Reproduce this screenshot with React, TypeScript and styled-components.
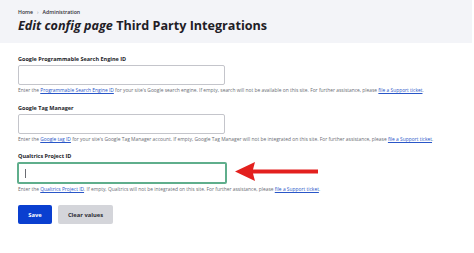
import React from "react";
import styled, { createGlobalStyle } from "styled-components";

const Global = createGlobalStyle`
  html, body { margin: 0; padding: 0; background: #ffffff; }
  body { font-family: "Open Sans", "Liberation Sans", sans-serif; color: #232429; }
  * { box-sizing: border-box; }
`;

const Page = styled.div`
  position: relative;
  width: 474px;
  height: 253px;
  overflow: hidden;
  background: #fff;
`;

const Header = styled.header`
  height: 43px;
  margin-right: 2px;
  background: #f3f4f8;
  padding: 9px 0 0 18px;
  display: flex;
  flex-direction: column;
`;

const Breadcrumb = styled.nav`
  display: flex;
  align-items: center;
  gap: 4px;
  font-size: 5.2px;
  font-weight: 600;
  line-height: 6px;
  color: #2f3036;
`;

const Sep = styled.span`
  color: #8e919a;
  font-weight: 400;
`;

const Title = styled.h1`
  margin: 2px 0 0;
  font-size: 12.6px;
  line-height: 17px;
  font-weight: 700;
  color: #1f2026;
  white-space: nowrap;
  em { font-style: italic; font-weight: 700; }
`;

const Form = styled.form`
  padding: 13px 0 0 18px;
  display: flex;
  flex-direction: column;
`;

const Field = styled.div`
  display: flex;
  flex-direction: column;
  margin-bottom: ${(p: { $mb: number }) => p.$mb}px;
`;

const Label = styled.label`
  font-size: 5.5px;
  font-weight: 700;
  line-height: 7px;
  color: #232429;
  margin-bottom: 2px;
`;

const Input = styled.div<{ $focus?: boolean }>`
  width: ${(p) => (p.$focus ? 210 : 207)}px;
  height: ${(p) => (p.$focus ? 22 : 20)}px;
  margin-left: ${(p) => (p.$focus ? -1 : 0)}px;
  border: ${(p) => (p.$focus ? "2px solid #5fae8c" : "1px solid #c4c5cb")};
  border-radius: 2px;
  background: #fff;
  display: flex;
  align-items: center;
  padding-left: 6px;
`;

const Caret = styled.span`
  width: 1px;
  height: 9px;
  background: #6a6c72;
`;

const Desc = styled.div`
  margin-top: 2px;
  font-size: 4.9px;
  line-height: 6px;
  color: #6a6c74;
  white-space: nowrap;
  a { color: #2956c8; text-decoration: underline; }
`;

const Actions = styled.div`
  display: flex;
  gap: 6px;
  margin-top: 13px;
`;

const Button = styled.button<{ $primary?: boolean }>`
  height: 19px;
  width: ${(p) => (p.$primary ? 34 : 55)}px;
  border: none;
  border-radius: 2px;
  font-family: inherit;
  font-size: 5.8px;
  font-weight: 700;
  padding: 0;
  background: ${(p) => (p.$primary ? "#0a3fd0" : "#d4d5da")};
  color: ${(p) => (p.$primary ? "#ffffff" : "#2b2c33")};
`;

const Arrow = styled.svg`
  position: absolute;
  left: 234px;
  top: 161px;
`;

export default function App() {
  return (
    <>
      <Global />
      <Page>
        <Header>
          <Breadcrumb>
            <span>Home</span>
            <Sep>›</Sep>
            <span>Administration</span>
          </Breadcrumb>
          <Title>
            <em>Edit config page</em> Third Party Integrations
          </Title>
        </Header>
        <Form>
          <Field $mb={12}>
            <Label>Google Programmable Search Engine ID</Label>
            <Input />
            <Desc>
              Enter the <a>Programmable Search Engine ID</a> for your site's Google search engine. If empty, search will not be available on this site. For further assistance, please <a>file a Support ticket</a>.
            </Desc>
          </Field>
          <Field $mb={11}>
            <Label>Google Tag Manager</Label>
            <Input />
            <Desc>
              Enter the <a>Google tag ID</a> for your site's Google Tag Manager account. If empty, Google Tag Manager will not be integrated on this site. For further assistance, please <a>file a Support ticket</a>.
            </Desc>
          </Field>
          <Field $mb={0}>
            <Label>Qualtrics Project ID</Label>
            <Input $focus>
              <Caret />
            </Input>
            <Desc>
              Enter the <a>Qualtrics Project ID</a>. If empty, Qualtrics will not be integrated on this site. For further assistance, please <a>file a Support ticket</a>.
            </Desc>
          </Field>
          <Actions>
            <Button $primary type="button">Save</Button>
            <Button type="button">Clear values</Button>
          </Actions>
        </Form>
        <Arrow width="86" height="21" viewBox="0 0 86 21">
          <polygon points="1,10.5 21,1 19,8.5 84,8.5 84,12.5 19,12.5 21,20" fill="#e3201e" />
        </Arrow>
      </Page>
    </>
  );
}
